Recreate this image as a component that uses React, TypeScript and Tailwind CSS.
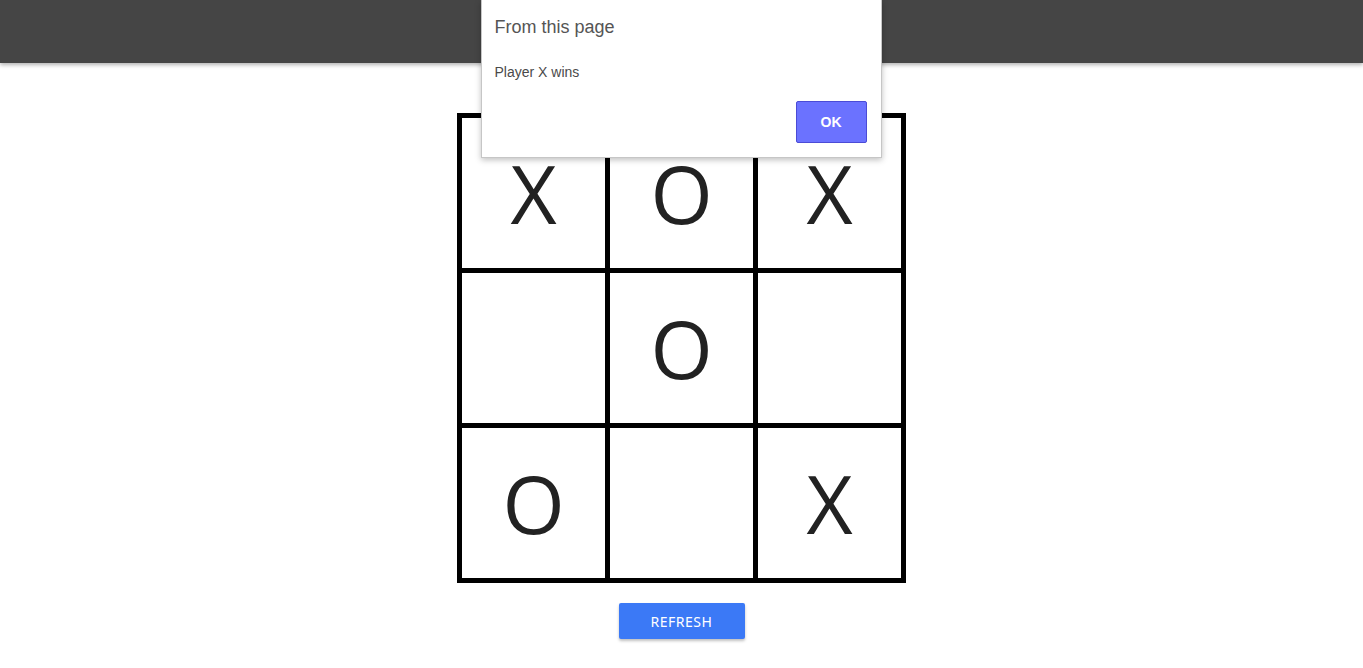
import React from 'react';

const board: string[] = ['X', 'O', 'X', '', 'O', '', 'O', '', 'X'];

export default function App() {
  return (
    <div className="relative min-h-[668px] bg-white font-['Noto_Sans',sans-serif]">
      {/* Top bar */}
      <header className="h-[63px] bg-[#454545] shadow-[0_2px_4px_rgba(0,0,0,0.3)]" />

      {/* Board */}
      <main className="flex flex-col items-center pt-[50px]">
        <div className="grid grid-cols-3 gap-[5px] border-[5px] border-black bg-black">
          {board.map((mark, i) => (
            <div
              key={i}
              className="flex h-[150px] w-[143px] items-center justify-center bg-white font-['Open_Sans',sans-serif] text-[80px] leading-none text-[#222]"
            >
              {mark}
            </div>
          ))}
        </div>

        <button className="mt-[20px] h-[36px] w-[126px] rounded-[2px] bg-[#3b79f6] text-[14px] tracking-[0.5px] text-white shadow-[0_2px_3px_rgba(0,0,0,0.25)]">
          REFRESH
        </button>
      </main>

      {/* Alert dialog */}
      <div className="absolute left-1/2 top-0 ml-[-201px] h-[158px] w-[401px] border border-t-0 border-[#c6c6c6] bg-white font-['Liberation_Sans',Arial,sans-serif] shadow-[0_2px_6px_rgba(0,0,0,0.25)]">
        <div className="px-[13px] pt-[14px] text-[18px] text-[#555]">From this page</div>
        <div className="px-[13px] pt-[21px] text-[14px] text-[#4a4a4a]">Player X wins</div>
        <div className="flex justify-end px-[14px] pt-[18px]">
          <button className="h-[42px] w-[71px] rounded-[2px] border border-[#4b4bd6] bg-[#6b72ff] text-[14px] font-bold text-white">
            OK
          </button>
        </div>
      </div>
    </div>
  );
}
